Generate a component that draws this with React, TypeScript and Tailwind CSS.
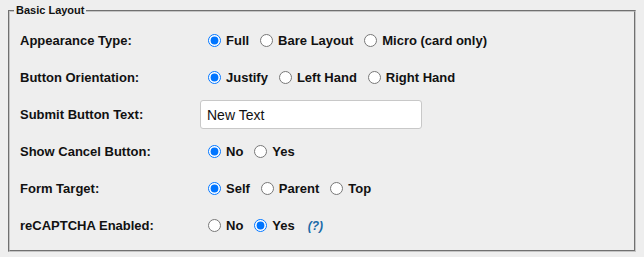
import React from "react";

type Opt = { label: string; checked?: boolean };

function RadioGroup({ name, options, extra }: { name: string; options: Opt[]; extra?: React.ReactNode }) {
  return (
    <div className="flex items-center gap-[11px] pl-[8px]">
      {options.map((o) => (
        <label key={o.label} className="flex items-center gap-[5px] font-bold text-[13px] text-[#111]">
          <input
            type="radio"
            name={name}
            defaultChecked={o.checked}
            className="m-0 w-[13px] h-[13px]"
          />
          <span>{o.label}</span>
        </label>
      ))}
      {extra}
    </div>
  );
}

function Row({ label, children }: { label: string; children: React.ReactNode }) {
  return (
    <div className="flex items-center h-[37px]">
      <div className="w-[180px] font-bold text-[13px] text-[#111]">{label}</div>
      <div className="flex items-center">{children}</div>
    </div>
  );
}

export default function App() {
  return (
    <div
      className="w-[644px] h-[257px] bg-[#eeeeee] pt-[4px] px-[8px]"
      style={{ fontFamily: '"Liberation Sans", Arial, Helvetica, sans-serif' }}
    >
      <fieldset className="border-2 [border-style:groove] border-[#c4c4c4] px-[4px] pb-[7px] m-0 h-[248px]">
        <legend className="px-[2px] text-[11px] font-bold text-[#111] leading-[13px]">Basic Layout</legend>
        <div className="pl-[6px] pt-[5px]">
          <Row label="Appearance Type:">
            <RadioGroup
              name="appearance"
              options={[{ label: "Full", checked: true }, { label: "Bare Layout" }, { label: "Micro (card only)" }]}
            />
          </Row>
          <Row label="Button Orientation:">
            <RadioGroup
              name="orientation"
              options={[{ label: "Justify", checked: true }, { label: "Left Hand" }, { label: "Right Hand" }]}
            />
          </Row>
          <Row label="Submit Button Text:">
            <input
              type="text"
              defaultValue="New Text"
              className="w-[222px] h-[29px] bg-white border border-[#c8c8c8] rounded-[3px] px-[6px] text-[14px] text-[#111] outline-none"
            />
          </Row>
          <Row label="Show Cancel Button:">
            <RadioGroup name="cancel" options={[{ label: "No", checked: true }, { label: "Yes" }]} />
          </Row>
          <Row label="Form Target:">
            <RadioGroup
              name="target"
              options={[{ label: "Self", checked: true }, { label: "Parent" }, { label: "Top" }]}
            />
          </Row>
          <Row label="reCAPTCHA Enabled:">
            <RadioGroup
              name="recaptcha"
              options={[{ label: "No" }, { label: "Yes", checked: true }]}
              extra={<span className="ml-[2px] text-[12px] font-bold italic text-[#1a6aa8]">(?)</span>}
            />
          </Row>
        </div>
      </fieldset>
    </div>
  );
}
